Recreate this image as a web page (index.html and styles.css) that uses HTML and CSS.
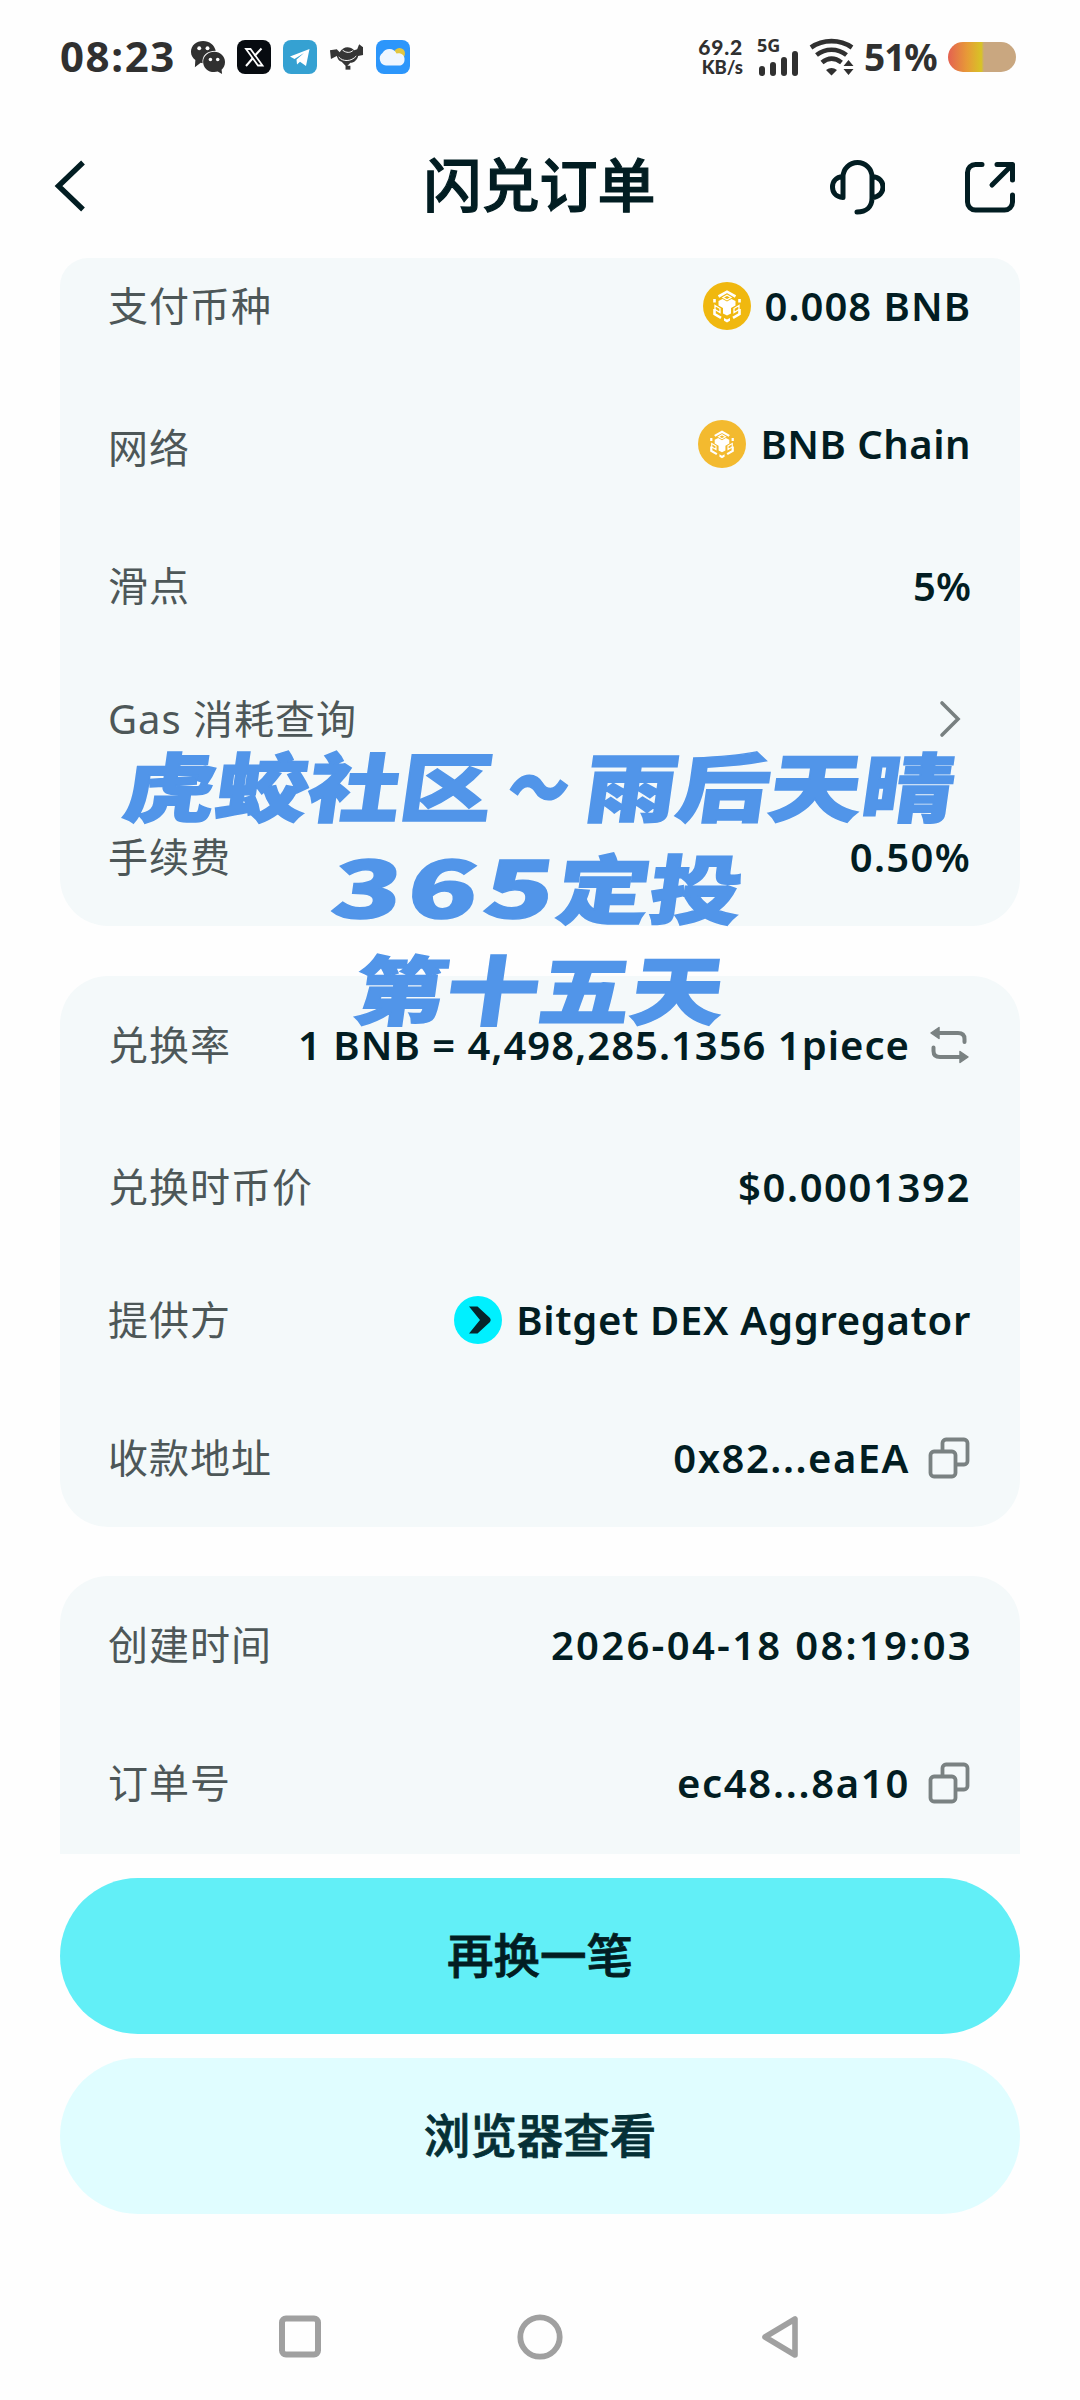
FILE: index.html
```html
<!DOCTYPE html>
<html lang="zh-CN">
<head>
<meta charset="utf-8">
<title>闪兑订单</title>
<link rel="stylesheet" href="styles.css">
</head>
<body>
<svg class="defs" width="0" height="0" aria-hidden="true">
  <symbol id="bnb" viewBox="0 0 48 48">
    <g fill="none" stroke="#fff" stroke-width="2.600" stroke-linejoin="miter">
      <path d="M15.500 14.500 24 9.700l8.500 4.800M11.500 20.500V17M36.500 20.500V17M11.500 27v5l6.500 3.800M36.500 27v5L30 35.800"/>
    </g>
    <path fill="#fff" d="M15.500 19l4-2 4.500 2.600 4.500-2.600 4 2v4.500l-4.500 2.600v5.400L24 33.500l-4-2v-5.400l-4.500-2.600zM21 36l3 1.600 3-1.600v2.800l-3 1.800-3-1.800z"/>
    <path d="M20 15.500l4-2.300 4 2.300-4 2.300zM12 23.500l5 3v4l-5-3zM36 23.500l-5 3v4l5-3z" fill="none" stroke="#fff" stroke-width="1.300"/>
  </symbol>
  <symbol id="copy" viewBox="0 0 42 42">
    <g fill="none" stroke="#7a8282" stroke-width="3.800">
      <path d="M14.500 14.500V6a3.500 3.500 0 0 1 3.500-3.500h18A3.500 3.500 0 0 1 39.500 6v18a3.500 3.500 0 0 1-3.500 3.500h-8.500"/>
      <rect x="2.500" y="14.500" width="25" height="25" rx="3.500"/>
    </g>
  </symbol>
</svg>

<header class="status">
  <div class="status-left">
    <span class="clock">08:23</span>
    <svg width="35" height="35" viewBox="0 0 36 36"><path fill="#303030" d="M13.500 1C6.500 1 1 5.700 1 12c0 4 2 6.500 4.500 8.500L5 28l6-4.500 2 .5C12 16 17 11 26.500 11 25 5 20 1 13.500 1z"/><path fill="#303030" d="M25 12c6 0 11 4.500 11 10.500 0 3.500-1.500 6-3.500 8L33 35l-4.500-2.500q-1.500.5-3.500.500c-6.500 0-11.500-4.500-11.500-10.500S18.500 12 25 12z"/><g fill="#fff"><circle cx="9.500" cy="8.500" r="2"/><circle cx="18" cy="8.500" r="2"/><circle cx="21" cy="20" r="1.800"/><circle cx="28.500" cy="20" r="1.800"/></g></svg>
    <svg width="34" height="34" viewBox="0 0 34 34"><rect width="34" height="34" rx="8" fill="#070b10"/><path d="M9 9h4.500l12 16.500H21z" fill="none" stroke="#fff" stroke-width="1.800"/><path d="M24.500 8.500l-7 7.500M15.500 18.500l-6.500 7.500" stroke="#fff" stroke-width="2"/></svg>
    <svg width="34" height="34" viewBox="0 0 34 34"><rect width="34" height="34" rx="8" fill="#35a1d2"/><path fill="#fff" d="M7 16.500L26.500 9 23 26l-6-4.300-3 2.800-.5-5L21 13l-9.500 6z"/></svg>
    <svg width="35" height="28" viewBox="0 0 36 28"><path fill="#353535" d="M1 7l7-1 3 3c4-7 11-6 15-2l3-1 2-5 4 3v8l-5 1c-1 4-4 7-8 7l-4 4-5-5c-3-1-4-3-5-6l-6 3z"/><path d="M10 14c4 5 13 5 18-1M14 7c4 3 8 3 11 0" fill="none" stroke="#fff" stroke-width="1"/><path fill="#353535" d="M17 23h5v4h-5z"/></svg>
    <svg width="34" height="34" viewBox="0 0 34 34"><rect width="34" height="34" rx="8" fill="#2c96fb"/><circle cx="23.500" cy="13.500" r="5.500" fill="#e2c640"/><path fill="#eff6ff" d="M10 25.500a7 7 0 0 1-3.500-12.500 8 8 0 0 1 14 .500 6 6 0 0 1 8 6.500c0 3.500-2.500 5.500-5.500 5.500z"/></svg>
  </div>
  <div class="status-right">
    <div class="speed"><span class="rate">69.2</span><span class="unit">KB/s</span></div>
    <div class="cell"><span>5G</span>
      <svg width="42" height="26" viewBox="0 0 42 26"><g fill="#303030"><rect x="2" y="16" width="6" height="10" rx="3"/><rect x="13" y="12" width="6" height="14" rx="3"/><rect x="24" y="7" width="6" height="19" rx="3"/><rect x="35" y="1" width="6" height="25" rx="3"/></g></svg>
    </div>
    <svg class="wifi" width="46" height="38" viewBox="0 0 46 38"><g fill="none" stroke="#303030" stroke-width="4.600"><path d="M2 9.500C14 1 31 1 43 9.500"/><path d="M7.500 17c9-7 21-7 30 0"/><path d="M13 24.500c6-5 13-5 19.500 0"/></g><path fill="#303030" d="M17 32q5.500-4 11 0l-5.500 5.500zM34.500 28l5-6 5 6zM34.500 31h10l-5 6z"/></svg>
    <span class="percent">51%</span>
    <span class="battery"></span>
  </div>
</header>

<nav class="titlebar">
  <svg width="36" height="56" viewBox="0 0 36 56"><path d="M31 4.500L6.500 28 31 51.500" fill="none" stroke="#021d22" stroke-width="5.400"/></svg>
  <h1>闪兑订单</h1>
  <div class="tools">
    <svg width="58" height="58" viewBox="0 0 58 58"><g fill="none" stroke="#021d22" stroke-width="5" stroke-linecap="round" stroke-linejoin="round"><path d="M16 40.500V20a14.500 14.500 0 0 1 29 0v21c0 9-6 14-15 14M16 19.500C8.500 20 5.500 25 5.500 30s3 10 10.500 10.500M45 19.500c7.500.5 11 5.500 11 10.500s-3.500 10-11 10.500"/></g></svg>
    <svg width="54" height="54" viewBox="0 0 54 54"><g fill="none" stroke="#021d22" stroke-width="5" stroke-linecap="round" stroke-linejoin="round"><path d="M19 5.500h-6.500a8 8 0 0 0-8 8V43a8 8 0 0 0 8 8h29a8 8 0 0 0 8-8v-7M34 5.500h15.500V21M48 7L29 26"/></g></svg>
  </div>
</nav>

<main class="details">
  <section class="card card-pay">
    <div class="row"><span class="label">支付币种</span><span class="value"><svg class="coin" width="48" height="48"><use href="#bnb"/></svg><b class="ls-10">0.008 BNB</b></span></div>
    <div class="row"><span class="label drop">网络</span><span class="value"><svg class="coin chain" width="48" height="48" viewBox="-4 -4 56 56"><use href="#bnb" width="48" height="48"/></svg><b class="ls-5">BNB Chain</b></span></div>
    <div class="row low"><span class="label">滑点</span><span class="value"><b>5%</b></span></div>
    <div class="row"><span class="label">Gas 消耗查询</span><svg class="more" width="24" height="40" viewBox="0 0 24 40"><path d="M4 4l16 16L4 36" fill="none" stroke="#788080" stroke-width="3.600" stroke-linecap="round"/></svg></div>
    <div class="row"><span class="label">手续费</span><span class="value"><b class="ls-12">0.50%</b></span></div>
  </section>
  <section class="card card-rate">
    <div class="row"><span class="label">兑换率</span><span class="value"><b class="ls-10">1 BNB = 4,498,285.1356 1piece</b><svg width="42" height="42" viewBox="0 0 42 42"><g fill="none" stroke="#7a8282" stroke-width="4" stroke-linecap="round"><path d="M9 9h21q6.500 0 6.500 6v3M5.500 23.500V27q0 6 6.500 6h21"/></g><path fill="#7a8282" stroke="#7a8282" stroke-width="1.500" stroke-linejoin="round" d="M3 9l8-5.500v11zM40 33l-8-5.500v11z"/></svg></span></div>
    <div class="row low"><span class="label">兑换时币价</span><span class="value"><b class="ls-16">$0.0001392</b></span></div>
    <div class="row"><span class="label">提供方</span><span class="value"><svg width="48" height="48" viewBox="0 0 48 48"><circle cx="24" cy="24" r="24" fill="#00f0ff"/><path fill="#06252b" d="M15 10.500h8.500L36 22q1.500 2 0 4L23.500 37.500H15L26 24z"/></svg><b class="ls-7">Bitget DEX Aggregator</b></span></div>
    <div class="row"><span class="label">收款地址</span><span class="value"><b class="ls-15">0x82...eaEA</b><svg width="42" height="42"><use href="#copy"/></svg></span></div>
  </section>
  <section class="card card-order">
    <div class="row"><span class="label">创建时间</span><span class="value"><b class="ls-22">2026-04-18 08:19:03</b></span></div>
    <div class="row"><span class="label">订单号</span><span class="value"><b class="ls-17">ec48...8a10</b><svg width="42" height="42"><use href="#copy"/></svg></span></div>
  </section>
  <div class="watermark"><p>虎蛟社区<span class="tilde">～</span>雨后天晴</p><p><span class="num">365</span>定投</p><p>第十五天</p></div>
</main>

<footer class="actions">
  <button class="btn primary">再换一笔</button>
  <button class="btn secondary">浏览器查看</button>
</footer>

<div class="navkeys">
  <svg width="44" height="50" viewBox="0 0 44 50"><rect x="4" y="6.500" width="36" height="36" rx="4" fill="none" stroke="#a0a0a0" stroke-width="6"/></svg>
  <svg width="46" height="50" viewBox="0 0 46 50"><circle cx="23" cy="25" r="19.700" fill="none" stroke="#a0a0a0" stroke-width="5.800"/></svg>
  <svg width="44" height="50" viewBox="0 0 44 50"><path d="M37 7v36L7 25z" fill="none" stroke="#a0a0a0" stroke-width="5.600" stroke-linejoin="round"/></svg>
</div>
</body>
</html>
```
FILE: styles.css
```css
* { box-sizing: border-box; }
body {
  margin: 0;
  width: 1080px;
  height: 2400px;
  overflow: hidden;
  background: #fefefe;
  color: #021d22;
  font-family: "Noto Sans", "Noto Sans CJK SC", sans-serif;
  display: flex;
  flex-direction: column;
}
svg { display: block; flex: none; }
.defs { position: absolute; }

.status {
  height: 114px;
  padding: 0 64px 0 60px;
  display: flex;
  justify-content: space-between;
  align-items: center;
  color: #303030;
  font-weight: 700;
}
.status-left { display: flex; align-items: center; gap: 12px; }
.clock { font-size: 42px; letter-spacing: 1.6px; width: 118px; line-height: 50px; padding-bottom: 2px; }
.status-right { display: flex; align-items: center; }
.speed { width: 46px; display: flex; flex-direction: column; align-items: flex-end; font-family: Lato, sans-serif; font-weight: 900; line-height: 20px; }
.speed span { white-space: nowrap; }
.rate { font-size: 21px; letter-spacing: .8px; }
.unit { font-size: 18.500px; }
.cell { width: 44px; height: 38px; margin-left: 14px; font-size: 18px; line-height: 14px; display: flex; flex-direction: column; justify-content: space-between; }
.cell svg { margin-top: -3px; }
.wifi { margin-left: 8px; }
.percent { width: 73px; margin-left: 9px; font-size: 37px; line-height: 50px; letter-spacing: -1px; }
.battery { width: 68px; height: 30px; margin-left: 11px; border-radius: 15px; background: linear-gradient(90deg, #e46151 0, #e79a37 28%, #d7c326 49%, #c9a780 53%, #c9a780 100%); }

.titlebar {
  height: 144px;
  padding: 0 63px 0 52px;
  display: grid;
  grid-template-columns: 190px 1fr 190px;
  align-items: center;
}
.titlebar h1 { margin: 0; padding: 0 0 8px 10px; font-size: 58px; font-weight: 500; line-height: 70px; text-align: center; font-family: "Noto Sans CJK SC", sans-serif; -webkit-text-stroke: 1.2px; }
.tools { display: flex; justify-content: space-between; align-items: center; }

.details { position: relative; height: 1597px; padding: 0 60px; }
.card { padding: 0 49px 0 48px; background: #f4f9fa; border-radius: 48px; display: flex; flex-direction: column; }
.card-pay { height: 668px; border-radius: 28px 28px 48px 48px; }
.card-rate { height: 551px; margin-top: 50px; }
.card-order { height: 278px; margin-top: 49px; border-radius: 48px 48px 0 0; }
.row { height: 138px; display: flex; justify-content: space-between; align-items: center; }
.card-pay .row:first-child { height: 117px; padding-bottom: 20px; }
.row.low { padding-top: 8px; }
.label { font-size: 40px; line-height: 60px; letter-spacing: 1px; color: #4d5758; white-space: nowrap; }
.label.drop { padding-top: 8px; }
.value { display: flex; align-items: center; }
.value b { font-size: 40px; line-height: 60px; font-weight: 600; white-space: nowrap; }
.value b + svg { margin-left: 18px; margin-right: 1px; }
.value svg + b { margin-left: 14px; }
.value .ls-5 { letter-spacing: .5px; }
.value .ls-7 { letter-spacing: .7px; }
.value .ls-10 { letter-spacing: 1px; }
.value .ls-12 { letter-spacing: 1.3px; }
.value .ls-15 { letter-spacing: 1.5px; }
.value .ls-16 { letter-spacing: 1.6px; }
.value .ls-17 { letter-spacing: 1.7px; }
.value .ls-22 { letter-spacing: 2.3px; margin-right: -2px; }
.coin { border-radius: 50%; background: #f0b80f; }
.chain { background: #f3ba2f; }
.more { margin-right: 9px; }

.watermark {
  position: absolute;
  left: 100px;
  right: 100px;
  top: 475px;
  text-align: center;
  color: #5195e9;
  font-family: "Noto Sans CJK SC", sans-serif;
  font-weight: 900;
  font-size: 75px;
  line-height: 101px;
  -webkit-text-stroke: 1.500px;
}
.watermark p { margin: 0; white-space: nowrap; transform: skewX(-8deg) scaleX(1.23); }
.num { display: inline-block; font-size: 78px; letter-spacing: 4px; transform: scaleX(1.2); margin: 0 14px 0 12px; }
.tilde { display: inline-block; transform: scaleX(.66); }

.actions { padding: 23px 60px 0; display: flex; flex-direction: column; gap: 24px; }
.btn { height: 156px; padding: 0 0 6px; border: 0; border-radius: 78px; font: 500 46.500px/60px "Noto Sans CJK SC", sans-serif; -webkit-text-stroke: .8px; color: #021d22; }
.primary { background: #62eff7; }
.secondary { background: #e0fdff; color: #053036; }

.navkeys { margin-top: 98px; padding: 0 278px; display: flex; justify-content: space-between; }
```
